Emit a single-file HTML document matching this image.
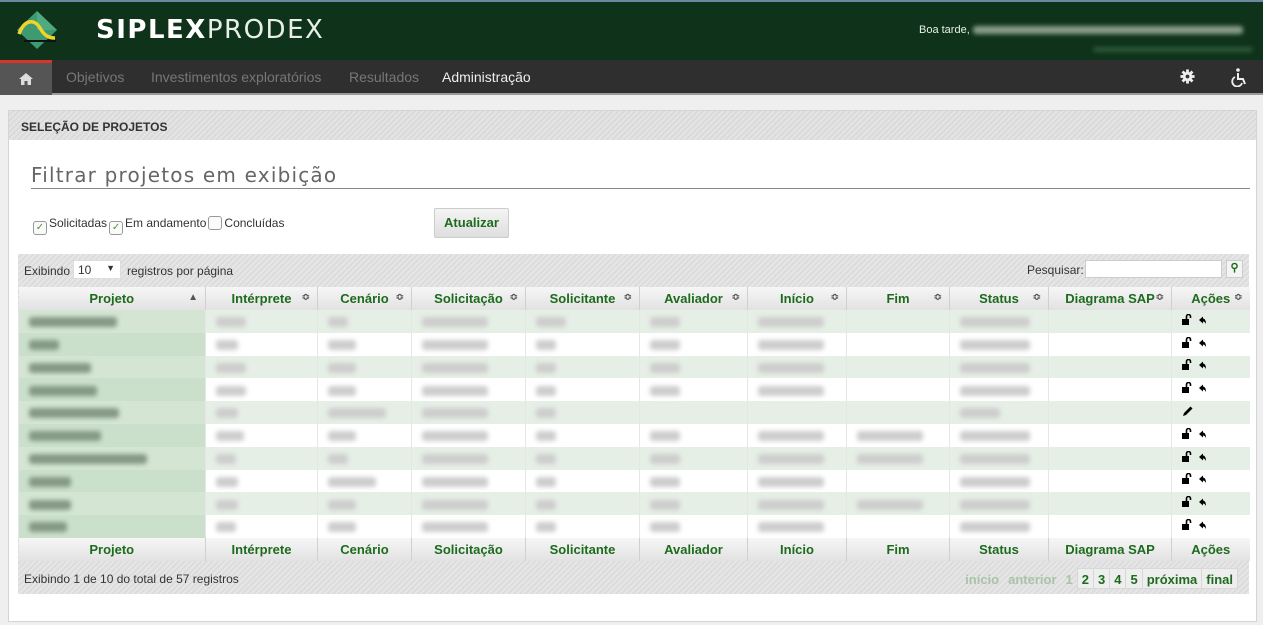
<!DOCTYPE html>
<html><head><meta charset="utf-8"><style>
*{box-sizing:border-box;margin:0;padding:0}
body{width:1263px;height:625px;overflow:hidden;background:#efefef;font-family:"Liberation Sans",sans-serif;font-size:12px;color:#333;position:relative}
.top{position:absolute;left:0;top:0;width:1263px;height:60px;background:#0e321a;border-top:2px solid #6a8aa0}
.brand{position:absolute;left:96px;top:13px;font-family:"DejaVu Sans","Liberation Sans",sans-serif;font-size:26px;color:#fff;letter-spacing:1.5px}
.brand b{font-weight:bold}
.brand span{font-weight:normal;color:#e8efe8}
.boa{position:absolute;left:919px;top:22px;color:#e8f0e8;font-size:11px}
.blur{display:inline-block;filter:blur(2.5px);border-radius:3px}
.nav{position:absolute;left:0;top:60px;width:1263px;height:35px;background:#2f2f2f;border-bottom:2px solid #9a9a9a}
.nav .home{position:absolute;left:0;top:0;width:52px;height:35px;background:#555;border-top:3px solid #d9342a}
.nav a{position:absolute;top:9px;font-family:"Liberation Sans",sans-serif;font-size:14px;color:#777;text-decoration:none}
.panel{position:absolute;left:8px;top:110px;width:1249px;height:512px;background:#fff;border:1px solid #d4d4d4}
.ptitle{height:29px;background:repeating-linear-gradient(135deg,#e4e4e4 0 2px,#dadada 2px 4px);font-weight:bold;font-size:12px;color:#333;padding:9px 0 0 12px}
.h2{position:absolute;left:22px;top:52px;width:1219px;border-bottom:1px solid #888;font-size:20px;color:#666;letter-spacing:1.2px;padding-bottom:1px;font-family:"DejaVu Sans",sans-serif}
.cb{display:inline-block;width:14px;height:14px;border:1px solid #999;border-radius:3px;background:#fafafa;vertical-align:-3px;position:relative;font-size:10px;color:#5a8a3a;text-align:center;line-height:12px;margin:0 2px}
.filters{position:absolute;left:22px;top:105px;font-size:12px}
.btn{position:absolute;left:425px;top:97px;width:75px;height:30px;border:1px solid #ccc;border-radius:2px;background:linear-gradient(#f4f4f4,#dedede);color:#1d6b1d;font-weight:bold;font-size:13px;text-align:center;line-height:28px}
.dt{position:absolute;left:9px;top:143px;width:1231px;background:repeating-linear-gradient(135deg,#e6e6e6 0 2px,#dcdcdc 2px 4px)}
.bar1{height:33px;position:relative;font-size:12px}
table{border-collapse:collapse;table-layout:fixed;width:1231px}
th{height:23px;background:linear-gradient(#f6f6f6,#e2e2e2);color:#1d6b1d;font-weight:bold;font-size:13px;border-left:1px solid #d0d0d0;position:relative}
th:first-child{border-left:none}
th i{position:absolute;right:7px;top:5px;font-style:normal;font-size:10px;color:#555}
td{height:22.8px;border-left:1px solid #e6e6e6;padding-left:10px;overflow:hidden;white-space:nowrap}
tr.o td{background:#e6efe6}
tr.e td{background:#fff}
tr.o td.p{background:#d4e5d4}
tr.e td.p{background:#cbe0cb}
.g{display:inline-block;height:10px;background:#cdcdcd;filter:blur(2.5px);border-radius:3px;vertical-align:middle}
.p .g{background:#849884}
.act{padding-left:10px}
.bar2{height:33px;position:relative}
.pg{position:absolute;right:11px;top:7px;display:flex}
.pg span{padding:0 4px;height:21px;line-height:21px;font-weight:bold;font-size:13px;border:1px solid #d8d8d8;background:#eee;color:#1d6b1d;margin-left:-1px}
.pg span.d{color:#a9c3a9;border-color:transparent;background:transparent}
</style></head><body>
<svg width="0" height="0" style="position:absolute"><defs>
<symbol id="lk" viewBox="0 0 24 12"><rect x="0" y="5" width="7" height="6" fill="#000"/><path d="M4.5 5 V2.5 A2 2 0 0 1 8.5 2.5 V4" stroke="#000" stroke-width="1.6" fill="none"/><path d="M17 6 L21 2.5 L21 4.5 C23 4.5 24 7 24 10 C23 8 22 7.5 21 7.5 L21 9.5 Z" fill="#000"/></symbol>
</defs></svg>
<div class="top">
<svg style="position:absolute;left:14px;top:6px" width="46" height="44" viewBox="0 0 46 44"><polygon points="23,3 43,22 23,41 3,22" fill="#3f9a72"/><polygon points="23,3 43,22 23,22" fill="#4faa80"/><path d="M5,26 C10,12 20,10 26,20 C30,27 34,30 41,30" stroke="#f0d42a" stroke-width="3.5" fill="none"/><line x1="10" y1="33" x2="42" y2="33" stroke="#111" stroke-width="2"/></svg>
<div class="brand"><b>SIPLEX</b><span>PRODEX</span></div>
<div class="boa">Boa tarde, <span class="blur" style="width:270px;height:8px;background:#8aa08a;vertical-align:middle"></span></div>
<span class="blur" style="position:absolute;left:1093px;top:45px;width:160px;height:5px;background:#2f5a3a"></span>
</div>
<div class="nav">
<div class="home"><svg style="position:absolute;left:18px;top:9px" width="16" height="14" viewBox="0 0 16 14"><path d="M8 1 L1 7 L3 7 L3 13 L6.5 13 L6.5 9 L9.5 9 L9.5 13 L13 13 L13 7 L15 7 Z" fill="#ddd"/></svg></div>
<a style="left:66px">Objetivos</a><a style="left:151px">Investimentos exploratórios</a><a style="left:349px">Resultados</a><a style="left:442px;color:#eee">Administração</a>
<svg style="position:absolute;left:1180px;top:9px" width="15" height="15" viewBox="0 0 16 16"><g fill="#eee"><circle cx="8" cy="8" r="5"/><rect x="6.5" y="0.5" width="3" height="15"/><rect x="0.5" y="6.5" width="15" height="3"/><rect x="6.5" y="0.5" width="3" height="15" transform="rotate(45 8 8)"/><rect x="6.5" y="0.5" width="3" height="15" transform="rotate(-45 8 8)"/></g><circle cx="8" cy="8" r="2" fill="#2f2f2f"/></svg>
<svg style="position:absolute;left:1230px;top:8px" width="18" height="19" viewBox="0 0 18 19"><circle cx="8" cy="2" r="1.8" fill="#eee"/><path d="M8 5 L8 11 L13 11 L15 16" stroke="#eee" stroke-width="2" fill="none"/><path d="M5 9 A5 5 0 1 0 12 15" stroke="#eee" stroke-width="1.8" fill="none"/></svg>
</div>
<div class="panel">
<div class="ptitle">SELEÇÃO DE PROJETOS</div>
<div class="h2">Filtrar projetos em exibição</div>
<div class="filters"><span class="cb">✓</span>Solicitadas<span class="cb">✓</span>Em andamento<span class="cb"></span>Concluídas</div>
<div class="btn">Atualizar</div>
<div class="dt">
<div class="bar1"><span style="position:absolute;left:6px;top:10px">Exibindo</span><span style="position:absolute;left:55px;top:6px;width:48px;height:19px;background:#fff;border:1px solid #ddd;padding:2px 0 0 4px">10 <span style="position:absolute;right:5px;top:2px;font-size:9px">▼</span></span><span style="position:absolute;left:109px;top:10px">registros por página</span>
<span style="position:absolute;left:1009px;top:9px">Pesquisar:</span><span style="position:absolute;left:1067px;top:6px;width:137px;height:18px;background:#fff;border:1px solid #ccc"></span><span style="position:absolute;left:1208px;top:6px;width:17px;height:18px;background:#f4f4f4;border:1px solid #ccc;color:#1d6b1d;font-size:11px;text-align:center;line-height:15px;font-weight:bold">⚲</span></div>
<table>
<colgroup><col style="width:187px"><col style="width:112px"><col style="width:94px"><col style="width:114px"><col style="width:114px"><col style="width:108px"><col style="width:99px"><col style="width:103px"><col style="width:99px"><col style="width:123px"><col style="width:78px"></colgroup>
<tr><th>Projeto<i>▲</i></th><th>Intérprete<i>≎</i></th><th>Cenário<i>≎</i></th><th>Solicitação<i>≎</i></th><th>Solicitante<i>≎</i></th><th>Avaliador<i>≎</i></th><th>Início<i>≎</i></th><th>Fim<i>≎</i></th><th>Status<i>≎</i></th><th>Diagrama SAP<i>≎</i></th><th>Ações<i>≎</i></th></tr>
<tr class="o"><td class="p"><span class="g" style="width:88px"></span></td><td><span class="g" style="width:30px"></span></td><td><span class="g" style="width:20px"></span></td><td><span class="g" style="width:66px"></span></td><td><span class="g" style="width:30px"></span></td><td><span class="g" style="width:30px"></span></td><td><span class="g" style="width:66px"></span></td><td></td><td><span class="g" style="width:70px"></span></td><td></td><td class="act"><svg width="24" height="12"><use href="#lk"/></svg></td></tr>
<tr class="e"><td class="p"><span class="g" style="width:30px"></span></td><td><span class="g" style="width:22px"></span></td><td><span class="g" style="width:28px"></span></td><td><span class="g" style="width:66px"></span></td><td><span class="g" style="width:20px"></span></td><td><span class="g" style="width:30px"></span></td><td><span class="g" style="width:66px"></span></td><td></td><td><span class="g" style="width:70px"></span></td><td></td><td class="act"><svg width="24" height="12"><use href="#lk"/></svg></td></tr>
<tr class="o"><td class="p"><span class="g" style="width:62px"></span></td><td><span class="g" style="width:30px"></span></td><td><span class="g" style="width:28px"></span></td><td><span class="g" style="width:66px"></span></td><td><span class="g" style="width:20px"></span></td><td><span class="g" style="width:30px"></span></td><td><span class="g" style="width:66px"></span></td><td></td><td><span class="g" style="width:70px"></span></td><td></td><td class="act"><svg width="24" height="12"><use href="#lk"/></svg></td></tr>
<tr class="e"><td class="p"><span class="g" style="width:68px"></span></td><td><span class="g" style="width:30px"></span></td><td><span class="g" style="width:28px"></span></td><td><span class="g" style="width:66px"></span></td><td><span class="g" style="width:20px"></span></td><td><span class="g" style="width:30px"></span></td><td><span class="g" style="width:66px"></span></td><td></td><td><span class="g" style="width:70px"></span></td><td></td><td class="act"><svg width="24" height="12"><use href="#lk"/></svg></td></tr>
<tr class="o"><td class="p"><span class="g" style="width:90px"></span></td><td><span class="g" style="width:22px"></span></td><td><span class="g" style="width:58px"></span></td><td><span class="g" style="width:66px"></span></td><td><span class="g" style="width:20px"></span></td><td></td><td></td><td></td><td><span class="g" style="width:40px"></span></td><td></td><td class="act"><svg width="12" height="12" viewBox="0 0 12 12"><path d="M1 11 L2 8 L8.5 1.5 L10.5 3.5 L4 10 Z" fill="#000"/></svg></td></tr>
<tr class="e"><td class="p"><span class="g" style="width:72px"></span></td><td><span class="g" style="width:28px"></span></td><td><span class="g" style="width:28px"></span></td><td><span class="g" style="width:66px"></span></td><td><span class="g" style="width:20px"></span></td><td><span class="g" style="width:30px"></span></td><td><span class="g" style="width:66px"></span></td><td><span class="g" style="width:66px"></span></td><td><span class="g" style="width:70px"></span></td><td></td><td class="act"><svg width="24" height="12"><use href="#lk"/></svg></td></tr>
<tr class="o"><td class="p"><span class="g" style="width:118px"></span></td><td><span class="g" style="width:20px"></span></td><td><span class="g" style="width:20px"></span></td><td><span class="g" style="width:66px"></span></td><td><span class="g" style="width:20px"></span></td><td><span class="g" style="width:30px"></span></td><td><span class="g" style="width:66px"></span></td><td><span class="g" style="width:66px"></span></td><td><span class="g" style="width:70px"></span></td><td></td><td class="act"><svg width="24" height="12"><use href="#lk"/></svg></td></tr>
<tr class="e"><td class="p"><span class="g" style="width:42px"></span></td><td><span class="g" style="width:22px"></span></td><td><span class="g" style="width:48px"></span></td><td><span class="g" style="width:66px"></span></td><td><span class="g" style="width:20px"></span></td><td><span class="g" style="width:30px"></span></td><td><span class="g" style="width:66px"></span></td><td></td><td><span class="g" style="width:70px"></span></td><td></td><td class="act"><svg width="24" height="12"><use href="#lk"/></svg></td></tr>
<tr class="o"><td class="p"><span class="g" style="width:42px"></span></td><td><span class="g" style="width:22px"></span></td><td><span class="g" style="width:28px"></span></td><td><span class="g" style="width:66px"></span></td><td><span class="g" style="width:20px"></span></td><td><span class="g" style="width:30px"></span></td><td><span class="g" style="width:66px"></span></td><td><span class="g" style="width:66px"></span></td><td><span class="g" style="width:70px"></span></td><td></td><td class="act"><svg width="24" height="12"><use href="#lk"/></svg></td></tr>
<tr class="e"><td class="p"><span class="g" style="width:38px"></span></td><td><span class="g" style="width:20px"></span></td><td><span class="g" style="width:28px"></span></td><td><span class="g" style="width:66px"></span></td><td><span class="g" style="width:20px"></span></td><td><span class="g" style="width:30px"></span></td><td><span class="g" style="width:66px"></span></td><td></td><td><span class="g" style="width:70px"></span></td><td></td><td class="act"><svg width="24" height="12"><use href="#lk"/></svg></td></tr>
<tr><th>Projeto</th><th>Intérprete</th><th>Cenário</th><th>Solicitação</th><th>Solicitante</th><th>Avaliador</th><th>Início</th><th>Fim</th><th>Status</th><th>Diagrama SAP</th><th>Ações</th></tr>
</table>
<div class="bar2"><span style="position:absolute;left:6px;top:11px">Exibindo 1 de 10 do total de 57 registros</span>
<div class="pg"><span class="d">início</span><span class="d">anterior</span><span class="d">1</span><span>2</span><span>3</span><span>4</span><span>5</span><span>próxima</span><span>final</span></div></div>
</div>
</div>
</body></html>
